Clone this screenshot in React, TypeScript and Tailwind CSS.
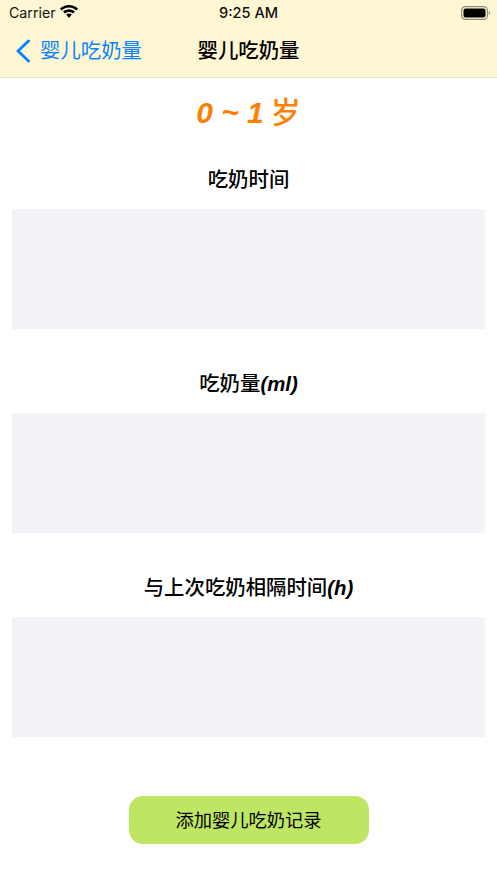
import React from "react";

const cjk = "font-['Liberation_Sans','Noto_Sans_CJK_SC',sans-serif]";

function Section({ label, unit }: { label: string; unit?: string }) {
  return (
    <section className="flex flex-col">
      <h2 className="h-[60px] pt-[2px] flex items-center justify-center text-[20.4px] font-medium text-black leading-none">
        {label}
        {unit && <em className="italic font-bold">{unit}</em>}
      </h2>
      <div className="h-[120px] mx-3 bg-[#f2f2f7]"></div>
    </section>
  );
}

export default function App() {
  return (
    <div className={`w-[497px] h-[883px] bg-white overflow-hidden flex flex-col ${cjk}`}>
      <header className="h-[78px] shrink-0 bg-[#fff7d4] border-b border-[#e6e2cf] flex flex-col">
        {/* status bar */}
        <div className="h-[26px] relative flex items-center justify-between pl-[9px] pr-[7px] text-[#111] font-['Inter',sans-serif]">
          <div className="flex items-center">
            <span className="w-[51px] text-[14.2px] leading-none">Carrier</span>
            <svg width="18" height="13" viewBox="0 0 18 13" className="-mt-[2px]" fill="black">
              <path d="M9 0C5.600 0 2.500 1.300 0 3.600l1.700 1.800C3.700 3.600 6.200 2.500 9 2.500s5.300 1.100 7.300 2.900L18 3.600C15.500 1.300 12.400 0 9 0z" />
              <path d="M9 4.300c-2.200 0-4.300.9-5.900 2.300l1.800 1.900C6 7.500 7.400 6.900 9 6.900s3 .6 4.100 1.600l1.800-1.900C13.300 5.200 11.200 4.300 9 4.300z" />
              <path d="M9 8.500c-1.100 0-2.100.4-2.800 1.100L9 13l2.800-3.400C11.100 8.900 10.100 8.500 9 8.500z" />
            </svg>
          </div>
          <span className="absolute left-[219px] text-[14.6px] font-medium leading-none">9:25 AM</span>
          <svg width="29" height="14" viewBox="0 0 29 14">
            <rect x="0.600" y="0.600" width="25.800" height="12.800" rx="3.800" fill="none" stroke="#8f8c78" strokeWidth="1.200" />
            <rect x="2.500" y="2.500" width="22" height="9" rx="2" fill="black" />
            <path d="M27.800 5c.7.200 1.200 1 1.200 2s-.5 1.800-1.200 2z" fill="#8f8c78" />
          </svg>
        </div>
        {/* nav bar */}
        <nav className="flex-1 relative flex items-center">
          <div className="flex items-center pl-[15px] gap-[9px] text-[#0a84ff] text-[20.400px] -mt-[1px]">
            <svg width="16" height="24" viewBox="0 0 16 24" fill="none">
              <path d="M13.500 2L3 12l10.500 10" stroke="#0a84ff" strokeWidth="3" strokeLinecap="round" strokeLinejoin="round" />
            </svg>
            <span className="leading-none">婴儿吃奶量</span>
          </div>
          <h1 className="absolute inset-x-0 -mt-[1px] text-center text-[20.400px] font-medium text-black leading-none">婴儿吃奶量</h1>
        </nav>
      </header>

      <main className="flex-1 flex flex-col">
        <div className="h-[71px] -mt-[1px] flex items-center justify-center text-[30px] font-bold text-[#ff8000] leading-none">
          <em className="italic">0 ~ 1</em>
          <span className="ml-[7px] font-medium">岁</span>
        </div>
        <div className="flex flex-col gap-[24px] mt-[1px]">
          <Section label="吃奶时间" />
          <Section label="吃奶量" unit="(ml)" />
          <Section label="与上次吃奶相隔时间" unit="(h)" />
        </div>
        <div className="flex justify-center mt-[59px]">
          <button className="w-[240px] h-[48px] pt-[1px] rounded-[14px] bg-[#bfe662] text-[18.300px] text-black">添加婴儿吃奶记录</button>
        </div>
      </main>
    </div>
  );
}
